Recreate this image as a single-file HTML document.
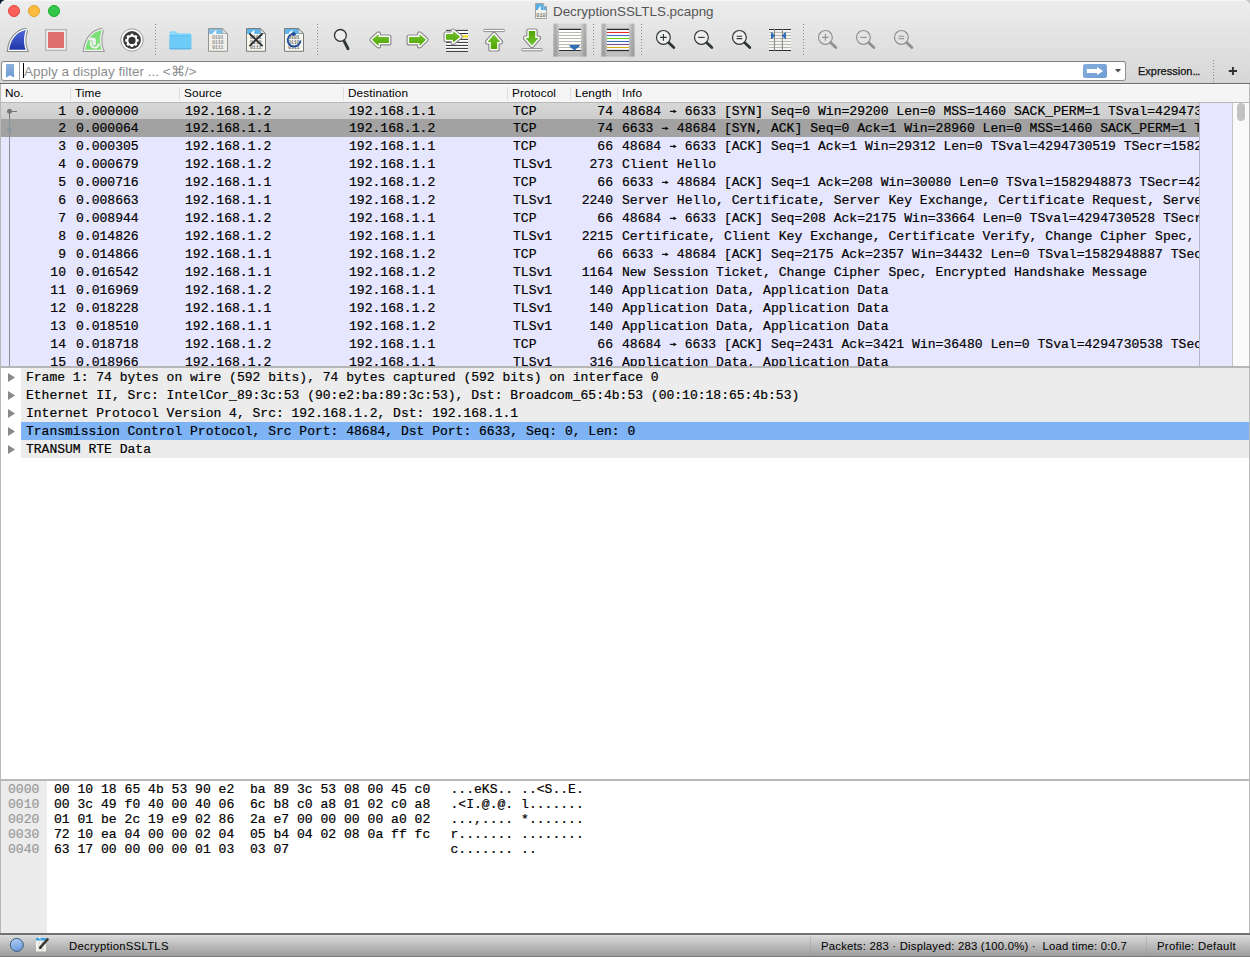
<!DOCTYPE html><html><head><meta charset="utf-8"><style>*{margin:0;padding:0;box-sizing:border-box}
html,body{width:1250px;height:957px;overflow:hidden}
body{position:relative;background:#fff;font-family:"Liberation Sans",sans-serif;color:#000}
#chrome{position:absolute;left:0;top:0;width:1250px;height:84px;background:linear-gradient(#ededed,#d6d6d6);box-shadow:inset 0 1px 0 #f6f6f6}
.tl{position:absolute;top:5px;width:12px;height:12px;border-radius:50%}
#title{position:absolute;left:553px;top:4px;font-size:13.4px;color:#555;white-space:nowrap;line-height:16px}
.ico{position:absolute}
.sep{position:absolute;top:24px;width:1px;height:32px;background:repeating-linear-gradient(#8a8a8a 0 1px,transparent 1px 3px)}
#fbox{position:absolute;left:1px;top:61px;width:1125px;height:20px;background:#fff;border:1px solid #8e8e8e;border-top-color:#808080;border-bottom-color:#8a8a8a;border-radius:3px}
#plist{position:absolute;left:0;top:84px;width:1250px;height:282px;background:#e7e6ff;border-left:1px solid #b8b8b8;border-right:1px solid #b8b8b8;overflow:hidden}
#phead{position:absolute;left:0;top:0;width:1248px;height:19px;background:#f5f5f5;border-top:1px solid #fbfbfb;border-bottom:1px solid #b9b9b9;z-index:2}
.h{position:absolute;top:1px;font-size:11.8px;letter-spacing:0.1px;line-height:14px;color:#000;white-space:nowrap}
.hsep{position:absolute;top:2px;width:1px;height:13px;background:#dedede}
.r{position:absolute;left:0;width:1231px;height:18px;font-family:"Liberation Mono",monospace;font-size:13.07px;line-height:18px;white-space:pre}
.r .c{position:absolute;top:1px}
.r .no{right:1166px;text-align:right}
.r .len{right:619px;text-align:right}
.r .info{left:621px;width:578px;overflow:hidden}
.sel1 .bg,.sel1::before{content:"";position:absolute;left:0;top:0;width:1199px;height:18px;background:linear-gradient(#d9d9d9,#cdcdcd)}
.sel2::before{content:"";position:absolute;left:0;top:0;width:1199px;height:18px;background:#a2a2a2}
#details{position:absolute;left:0;top:366px;width:1250px;height:413px;border-left:1px solid #b8b8b8;border-right:1px solid #b8b8b8;border-top:2px solid #b6b6b6}
#dbg{position:absolute;left:20px;top:0;width:1228px;height:90px;background:#ececec}
.d{position:absolute;left:0;width:1248px;height:18px;font-family:"Liberation Mono",monospace;font-size:13.02px;line-height:18px;white-space:pre}
.d span{position:absolute;left:25px;top:1px}
.d.sel::before{content:"";position:absolute;left:20px;top:0;width:1228px;height:18px;background:#7eb4f6}
.tri{position:absolute;left:7px;top:5px;width:7px;height:9px;background:#888;clip-path:polygon(0 0,100% 50%,0 100%)}
#hex{position:absolute;left:0;top:779px;width:1250px;height:155px;border-left:1px solid #b8b8b8;border-right:1px solid #b8b8b8;border-top:2px solid #b9b9b9}
#hoff{position:absolute;left:0;top:0;width:46px;height:153px;background:#ececec}
.hx{position:absolute;left:0;width:1249px;height:15px;font-family:"Liberation Mono",monospace;font-size:13.07px;line-height:15px;white-space:pre}
.hx span{position:absolute;top:0}
.off{left:7px;color:#999}
.hb{left:53px}
.asc{left:449.5px}
#status{position:absolute;left:0;top:933px;width:1250px;height:24px;background:linear-gradient(#777 0,#6e6e6e 1.5px,#e2e2e2 2px,#d8d8d8 3px,#9c9c9c 23px,#7a7a7a 23px,#7a7a7a 24px);font-size:11.5px;color:#000}
#fdiv{position:absolute;left:17px;top:0;width:1px;height:18px;background:#a4a4a4}
#caret{position:absolute;left:21px;top:1px;width:1px;height:15px;background:#000}
#fph{position:absolute;left:22px;top:1.5px;font-size:13.5px;line-height:16px;color:#8e8e8e;white-space:nowrap}
#expr{position:absolute;left:1138px;top:64px;font-size:11px;line-height:14px;color:#111;white-space:nowrap;-webkit-text-stroke:0.25px #111}
#darkline{position:absolute;left:0;top:83px;width:1250px;height:2px;background:linear-gradient(#6c6c6c 0,#6c6c6c 1.2px,#9a9a9a 1.2px,#d0d0d0 2px)}
#colline{position:absolute;left:1198px;top:19px;width:1px;height:263px;background:#b4b4c8}
#sbar{position:absolute;left:1231px;top:18px;width:17px;height:264px;background:#fafafa;border-left:1px solid #c4c4c4}
#thumb{position:absolute;left:4px;top:1px;width:8px;height:18px;border-radius:4px;background:#c2c2c2}
.st{position:absolute;top:6px;line-height:14px;white-space:pre;font-size:11.3px;letter-spacing:0.28px}
.ssep{position:absolute;top:3px;width:1px;height:20px;background:linear-gradient(#c0c0c0,#9a9a9a)}
.ar{vertical-align:0}
.first .c{top:2px}
.r,.d,.hx{-webkit-text-stroke:0.2px currentColor}
</style></head><body>
<div id="chrome"><svg id="corner" width="1250" height="6" style="position:absolute;left:0;top:0;z-index:5"><path d="M0,0 H4.5 Q1.5,0.8 0,4.5 Z" fill="#0b1836"/><path d="M1250,0 H1245.5 Q1248.5,0.8 1250,4.5 Z" fill="#c9c9c9"/></svg>
<i class="tl" style="left:8px;background:#fc605c;border:1px solid #e0443e"></i>
<i class="tl" style="left:28px;background:#fdbc40;border:1px solid #dea123"></i>
<i class="tl" style="left:48px;background:#34c84a;border:1px solid #1aab29"></i>
<svg width="14" height="18" style="position:absolute;left:534px;top:2px"><path d="M1.5,1.5 H9.5 L12.5,4.5 V16.5 H1.5 Z" fill="#f3f3ec" stroke="#9a9a96" stroke-width="0.9"/><rect x="2" y="2" width="7.5" height="6" fill="#58aee6"/><path d="M9.5,2 L12,4.5 V8 H9.5 Z" fill="#58aee6"/><path d="M9.5,1.5 V4.5 H12.5" fill="#fff" stroke="#9a9a96" stroke-width="0.7"/><path d="M4,8 C4.5,6 5.5,4.5 7,4 C6.5,5.5 6.5,7 7,8 Z" fill="#fff"/><text x="2.3" y="14.6" font-family="Liberation Mono" font-size="5.2" fill="#444">010</text></svg>
<div id="title">DecryptionSSLTLS.pcapng</div>
<svg id="tb" width="1250" height="84" style="position:absolute;left:0;top:0">
<defs>
<linearGradient id="gblue" x1="0" y1="0" x2="0" y2="1"><stop offset="0" stop-color="#5068d8"/><stop offset="1" stop-color="#1f34a8"/></linearGradient>
<linearGradient id="ggreen" x1="0" y1="0" x2="0" y2="1"><stop offset="0" stop-color="#74c334"/><stop offset="1" stop-color="#4ea600"/></linearGradient>
<linearGradient id="gfold" x1="0" y1="0" x2="0" y2="1"><stop offset="0" stop-color="#8fdafc"/><stop offset="1" stop-color="#68c6f3"/></linearGradient>
<linearGradient id="gbtn" x1="0" y1="0" x2="1" y2="0"><stop offset="0" stop-color="#000" stop-opacity="0.02"/><stop offset="0.06" stop-color="#000" stop-opacity="0.2"/><stop offset="0.2" stop-color="#000" stop-opacity="0"/><stop offset="0.8" stop-color="#000" stop-opacity="0"/><stop offset="0.94" stop-color="#000" stop-opacity="0.2"/><stop offset="1" stop-color="#000" stop-opacity="0.02"/></linearGradient><linearGradient id="gbtnv" x1="0" y1="0" x2="0" y2="1"><stop offset="0" stop-color="#d9d9d9"/><stop offset="0.5" stop-color="#cacaca"/><stop offset="1" stop-color="#bdbdbd"/></linearGradient>
</defs>
<!-- blue fin -->
<path d="M9.2,49.8 C10.5,40 16.5,31.5 26.1,30 C23.5,35 23.5,44 25.7,49.8 Z" fill="none" stroke="#8a8a8a" stroke-width="4.6" stroke-linejoin="miter" stroke-miterlimit="1.8"/>
<path d="M9.2,49.8 C10.5,40 16.5,31.5 26.1,30 C23.5,35 23.5,44 25.7,49.8 Z" fill="url(#gblue)" stroke="#fff" stroke-width="2.4" stroke-linejoin="miter" stroke-miterlimit="1.8"/>
<path d="M9.2,49.8 C10.5,40 16.5,31.5 26.1,30 C23.5,35 23.5,44 25.7,49.8 Z" fill="url(#gblue)"/>
<!-- stop -->
<rect x="45.6" y="29.6" width="20.8" height="20.8" fill="#ebebeb" stroke="#b3b3b3" stroke-width="1.2"/>
<rect x="48" y="32" width="16" height="16" fill="#e07070"/>
<!-- green fin -->
<g transform="translate(76,0)">
<path d="M9.2,49.8 C10.5,40 16.5,31.5 26.1,30 C23.5,35 23.5,44 25.7,49.8 Z" fill="none" stroke="#9a9a9a" stroke-width="4.6" stroke-miterlimit="1.8"/>
<path d="M9.2,49.8 C10.5,40 16.5,31.5 26.1,30 C23.5,35 23.5,44 25.7,49.8 Z" fill="#7ddf78" stroke="#f4f0f4" stroke-width="2.4" stroke-miterlimit="1.8"/>
<path d="M9.2,49.8 C10.5,40 16.5,31.5 26.1,30 C23.5,35 23.5,44 25.7,49.8 Z" fill="#7ddf78"/>
<circle cx="19.3" cy="43.8" r="0" fill="none"/><path d="M15.3,41.2 A4.1,4.1 0 1 0 22.8,43.2" fill="none" stroke="#f4eef4" stroke-width="1.9"/><path d="M12,37.8 L18.3,37.8 L19.8,39.2 L19.8,45 L16.6,45 L16.6,40.6 L13.3,40.6 Z" fill="#f4eef4"/></g>
<!-- gear -->
<circle cx="132" cy="40" r="11.2" fill="#fff" stroke="#9a9a9a" stroke-width="1"/>
<circle cx="132" cy="40" r="8.9" fill="#3a3a3a"/>
<g transform="translate(132,40)">
<path id="gearp" d="M-1.1,-6.3 L1.1,-6.3 L1.5,-4.9 L2.7,-4.4 L4,-5.1 L5.5,-3.6 L4.8,-2.3 L5.2,-1.1 L6.6,-0.7 L6.6,1.5 L5.2,1.9 L4.7,3.1 L5.4,4.4 L3.9,5.9 L2.6,5.2 L1.4,5.7 L1,7.1 L-1.2,7.1 L-1.6,5.7 L-2.8,5.2 L-4.1,5.9 L-5.6,4.4 L-4.9,3.1 L-5.4,1.9 L-6.8,1.5 L-6.8,-0.7 L-5.4,-1.1 L-4.9,-2.3 L-5.6,-3.6 L-4.1,-5.1 L-2.8,-4.4 L-1.5,-4.9 Z" fill="#fff"/>
<circle cx="0" cy="0.4" r="3.6" fill="#333"/>
</g>
<!-- folder -->
<path d="M169.5,49 V32.5 Q169.5,31.2 170.8,31.2 H175.6 L177.4,33.3 H190 Q191.3,33.3 191.3,34.6 V48 Q191.3,49.2 190,49.2 H170.8 Q169.5,49.2 169.5,48 Z" fill="url(#gfold)"/>
<rect x="169.5" y="35" width="21.8" height="14.2" rx="1" fill="#6ecaf6"/>
<rect x="169.5" y="35" width="21.8" height="1" fill="#5fc0f0"/>
<rect x="169.5" y="48.2" width="21.8" height="1" fill="#5aaee0"/>
<!-- docs -->
<g transform="translate(202,24)" opacity="0.75"><g>
<path d="M6.5,4.5 H20.6 L25.5,9.4 V27.3 H6.5 Z" fill="#f6f6ee" stroke="#7a7a76" stroke-width="1"/>
<rect x="7" y="5" width="13.6" height="5" fill="#5fb4ea"/>
<path d="M20.6,5 L25,9.4 V10 H7 V10 H20.6 Z" fill="#5fb4ea"/>
<path d="M20.6,5 V9.4 H25 Z" fill="#f2f2f2" stroke="#7a7a76" stroke-width="0.6"/>
<path d="M10.5,10 C11.5,8 13,6.5 15,6 C14,7.5 14,9 14.5,10 Z" fill="#fff"/>
<g font-family="Liberation Mono" font-size="5.2" fill="#7c7c7c" font-weight="bold"><text x="10" y="15.2" textLength="11.7">0101</text><text x="10" y="20.2" textLength="11.7">0110</text><text x="10" y="25" textLength="11.7">0111</text></g>
</g></g>
<g transform="translate(240,24)"><g>
<path d="M6.5,4.5 H20.6 L25.5,9.4 V27.3 H6.5 Z" fill="#f6f6ee" stroke="#7a7a76" stroke-width="1"/>
<rect x="7" y="5" width="13.6" height="5" fill="#5fb4ea"/>
<path d="M20.6,5 L25,9.4 V10 H7 V10 H20.6 Z" fill="#5fb4ea"/>
<path d="M20.6,5 V9.4 H25 Z" fill="#f2f2f2" stroke="#7a7a76" stroke-width="0.6"/>
<path d="M10.5,10 C11.5,8 13,6.5 15,6 C14,7.5 14,9 14.5,10 Z" fill="#fff"/>
<g font-family="Liberation Mono" font-size="5.2" fill="#7c7c7c" font-weight="bold"><text x="10" y="15.2" textLength="11.7">0101</text><text x="10" y="20.2" textLength="11.7">0110</text><text x="10" y="25" textLength="11.7">0111</text></g>
</g><path d="M10,10 L22,21.6 M22,10 L10,21.6" stroke="#2b2f30" stroke-width="1.9" stroke-linecap="round"/></g>
<g transform="translate(278,24)"><g>
<path d="M6.5,4.5 H20.6 L25.5,9.4 V27.3 H6.5 Z" fill="#f6f6ee" stroke="#7a7a76" stroke-width="1"/>
<rect x="7" y="5" width="13.6" height="5" fill="#5fb4ea"/>
<path d="M20.6,5 L25,9.4 V10 H7 V10 H20.6 Z" fill="#5fb4ea"/>
<path d="M20.6,5 V9.4 H25 Z" fill="#f2f2f2" stroke="#7a7a76" stroke-width="0.6"/>
<path d="M10.5,10 C11.5,8 13,6.5 15,6 C14,7.5 14,9 14.5,10 Z" fill="#fff"/>
<g font-family="Liberation Mono" font-size="5.2" fill="#7c7c7c" font-weight="bold"><text x="10" y="15.2" textLength="11.7">0101</text><text x="10" y="20.2" textLength="11.7">0110</text><text x="10" y="25" textLength="11.7">0111</text></g>
</g><path d="M17.2,9.8 A6.4,6.4 0 1 0 22.5,16.5" fill="none" stroke="#1f4f9c" stroke-width="1.9"/><path d="M14.5,7.5 L18.5,10 L15,12.5 Z" fill="#1f4f9c"/></g>
<!-- find -->
<circle cx="340.4" cy="35.4" r="5.9" fill="#ececec" stroke="#2f3435" stroke-width="1.3"/><path d="M336.8,33.2 Q337.8,31.6 339.8,31.3" stroke="#fff" stroke-width="1" fill="none"/><path d="M344.4,41.6 L348,48.6" stroke="#2f3435" stroke-width="3" stroke-linecap="round"/>
<!-- back / forward -->
<g transform="translate(364,24)"><path d="M7.9,15.7 L14.5,9.9 V13 H24.9 V18.9 H14.5 V21.9 Z" fill="none" stroke="#8a8a8a" stroke-width="5.2" stroke-linejoin="round"/><path d="M7.9,15.7 L14.5,9.9 V13 H24.9 V18.9 H14.5 V21.9 Z" fill="#fff" stroke="#fff" stroke-width="2.8" stroke-linejoin="round"/><path d="M7.9,15.7 L14.5,9.9 V13 H24.9 V18.9 H14.5 V21.9 Z" fill="url(#ggreen)"/></g>
<g transform="translate(434,24) scale(-1,1)"><path d="M7.9,15.7 L14.5,9.9 V13 H24.9 V18.9 H14.5 V21.9 Z" fill="none" stroke="#8a8a8a" stroke-width="5.2" stroke-linejoin="round"/><path d="M7.9,15.7 L14.5,9.9 V13 H24.9 V18.9 H14.5 V21.9 Z" fill="#fff" stroke="#fff" stroke-width="2.8" stroke-linejoin="round"/><path d="M7.9,15.7 L14.5,9.9 V13 H24.9 V18.9 H14.5 V21.9 Z" fill="url(#ggreen)"/></g>
<!-- goto -->
<g transform="translate(440,24)">
<rect x="6" y="6" width="22" height="22" fill="#fff"/>
<g stroke="#2a2e2f" stroke-width="1"><path d="M6,6.4H28M6,9.5H28M6,15.4H28M6,18.4H28M6,21.4H28M6,24.4H28M6,27.4H28"/></g>
<rect x="21" y="11.2" width="7" height="2.6" fill="#f2dc34"/>
<path id="garrow" d="M6,10 H13 V6.9 L20.2,12.7 L13,18.6 V15.7 H6 Z" fill="none" stroke="#8a8a8a" stroke-width="5" stroke-linejoin="round"/>
<path d="M6,10 H13 V6.9 L20.2,12.7 L13,18.6 V15.7 H6 Z" fill="#fff" stroke="#fff" stroke-width="2.8" stroke-linejoin="round"/>
<path d="M6,10 H13 V6.9 L20.2,12.7 L13,18.6 V15.7 H6 Z" fill="url(#ggreen)"/>
</g>
<!-- first -->
<g transform="translate(478,24)">
<rect x="5.5" y="5.4" width="21" height="2.2" rx="1.1" fill="#fff" stroke="#808080" stroke-width="0.9"/>
<path d="M16,10.5 L22.5,18 H19.2 V25 H12.8 V18 H9.5 Z" fill="none" stroke="#8a8a8a" stroke-width="5.2" stroke-linejoin="round"/><path d="M16,10.5 L22.5,18 H19.2 V25 H12.8 V18 H9.5 Z" fill="#fff" stroke="#fff" stroke-width="2.8" stroke-linejoin="round"/><path d="M16,10.5 L22.5,18 H19.2 V25 H12.8 V18 H9.5 Z" fill="url(#ggreen)"/>
</g>
<!-- last -->
<g transform="translate(516,24)">
<rect x="5.5" y="24.6" width="21" height="2.2" rx="1.1" fill="#fff" stroke="#808080" stroke-width="0.9"/>
<g transform="translate(0,32) scale(1,-1)"><path d="M16,10.5 L22.5,18 H19.2 V25 H12.8 V18 H9.5 Z" fill="none" stroke="#8a8a8a" stroke-width="5.2" stroke-linejoin="round"/><path d="M16,10.5 L22.5,18 H19.2 V25 H12.8 V18 H9.5 Z" fill="#fff" stroke="#fff" stroke-width="2.8" stroke-linejoin="round"/><path d="M16,10.5 L22.5,18 H19.2 V25 H12.8 V18 H9.5 Z" fill="url(#ggreen)"/></g>
</g>
<!-- autoscroll pressed -->
<rect x="553" y="23.6" width="34" height="33" fill="url(#gbtnv)"/><rect x="553" y="23.6" width="34" height="33" fill="url(#gbtn)"/>
<rect x="559" y="29" width="22" height="22" fill="#fff"/>
<g stroke="#b9b9b0" stroke-width="1"><path d="M559,32.5H581M559,35.5H581M559,38.5H581M559,41.5H581M559,44.5H581M559,47.5H581"/></g>
<g stroke="#2a2e2f" stroke-width="1.2"><path d="M559,29.4H581M559,50.5H581"/></g>
<path d="M569.5,45 H580 Q579.5,47.5 576,49 L574.8,51 L573,49 Q569.5,47.5 569.5,45 Z" fill="#2f6db5"/>
<!-- colorize pressed -->
<rect x="601" y="23.6" width="34" height="33" fill="url(#gbtnv)"/><rect x="601" y="23.6" width="34" height="33" fill="url(#gbtn)"/>
<rect x="607" y="29" width="22" height="22" fill="#fff"/>
<g stroke-width="1.1">
<path d="M607,29.4H629" stroke="#2a2e2f" stroke-width="1.3"/>
<path d="M607,32.5H629" stroke="#ee2b2b"/>
<path d="M607,35.5H629" stroke="#3b6fc0"/>
<path d="M607,38.5H629" stroke="#63d117"/>
<path d="M607,41.5H629" stroke="#3b6fc0"/>
<path d="M607,44.5H629" stroke="#7a4e8c"/>
<path d="M607,47.5H629" stroke="#d7a91a"/>
<path d="M607,50.5H629" stroke="#2a2e2f" stroke-width="1.3"/>
</g>
<!-- zoom in/out/normal -->
<g transform="translate(650,24)"><g><circle cx="13.4" cy="13.4" r="6.9" fill="#efefef" stroke="#2f3435" stroke-width="1.2"/><path d="M18.8,18.8 L23.8,23.6" stroke="#2f3435" stroke-width="2.8" stroke-linecap="round"/></g><path d="M10.1,13.4H16.7M13.4,10.1V16.7" stroke="#2f3435" stroke-width="1.1"/></g>
<g transform="translate(688,24)"><g><circle cx="13.4" cy="13.4" r="6.9" fill="#efefef" stroke="#2f3435" stroke-width="1.2"/><path d="M18.8,18.8 L23.8,23.6" stroke="#2f3435" stroke-width="2.8" stroke-linecap="round"/></g><path d="M10.1,13.4H16.7" stroke="#2f3435" stroke-width="1.1"/></g>
<g transform="translate(726,24)"><g><circle cx="13.4" cy="13.4" r="6.9" fill="#efefef" stroke="#2f3435" stroke-width="1.2"/><path d="M18.8,18.8 L23.8,23.6" stroke="#2f3435" stroke-width="2.8" stroke-linecap="round"/></g><path d="M10.6,12.2H16.2M10.6,14.6H16.2" stroke="#2f3435" stroke-width="1.1"/></g>
<!-- resize columns -->
<g transform="translate(764,24)">
<rect x="5" y="5.3" width="22" height="21.2" fill="#f4f4f4"/>
<g stroke="#b9b9b0" stroke-width="1"><path d="M5,8.4H27M5,11.5H27M5,14.5H27M5,17.5H27M5,20.5H27M5,23.5H27"/></g>
<g stroke="#2a2e2f" stroke-width="1.2"><path d="M5,5.5H27M5,26.5H27"/></g>
<g stroke="#8c8e8a" stroke-width="1.1"><path d="M10.5,5.3V26.5M18.4,5.3V26.5"/></g>
<path d="M7,8.5 Q7.5,8.2 8.2,8.5 L11,11.7 L8.2,14.8 Q7.5,15.1 7,14.8 Z" fill="#2f6db5"/>
<path d="M22,8.5 Q21.5,8.2 20.8,8.5 L18,11.7 L20.8,14.8 Q21.5,15.1 22,14.8 Z" fill="#2f6db5"/>
</g>
<!-- disabled zoom -->
<g transform="translate(812,24)"><g><circle cx="13.4" cy="13.4" r="6.9" fill="#e4e4e4" stroke="#8f9090" stroke-width="1.2"/><path d="M18.8,18.8 L23.8,23.6" stroke="#8f9090" stroke-width="2.8" stroke-linecap="round"/></g><path d="M10.1,13.4H16.7M13.4,10.1V16.7" stroke="#8f9090" stroke-width="1.1"/></g>
<g transform="translate(850,24)"><g><circle cx="13.4" cy="13.4" r="6.9" fill="#e4e4e4" stroke="#8f9090" stroke-width="1.2"/><path d="M18.8,18.8 L23.8,23.6" stroke="#8f9090" stroke-width="2.8" stroke-linecap="round"/></g><path d="M10.1,13.4H16.7" stroke="#8f9090" stroke-width="1.1"/></g>
<g transform="translate(888,24)"><g><circle cx="13.4" cy="13.4" r="6.9" fill="#e4e4e4" stroke="#8f9090" stroke-width="1.2"/><path d="M18.8,18.8 L23.8,23.6" stroke="#8f9090" stroke-width="2.8" stroke-linecap="round"/></g><path d="M10.6,12.2H16.2M10.6,14.6H16.2" stroke="#8f9090" stroke-width="1.1"/></g>
<!-- separators -->
<g fill="#7c7c7c"><rect x="155" y="24" width="1" height="1"/></g>
</svg>
<i class="sep" style="left:155px"></i>
<i class="sep" style="left:317px"></i>
<i class="sep" style="left:593px"></i>
<i class="sep" style="left:641px"></i>
<i class="sep" style="left:803px"></i>
<div id="fbox"><i id="fdiv"></i>
<svg width="10" height="16" style="position:absolute;left:4px;top:2px"><defs><linearGradient id="gbm" x1="0" y1="0" x2="0" y2="1"><stop offset="0" stop-color="#8cb2de"/><stop offset="1" stop-color="#6b9bd6"/></linearGradient></defs><path d="M0,0 H8 V13.7 L4,11.2 L0,13.7 Z" fill="url(#gbm)"/></svg>
<i id="caret"></i><span id="fph">Apply a display filter ... &lt;⌘/&gt;</span>
<svg width="25" height="15" style="position:absolute;left:1081px;top:2px"><defs><linearGradient id="gab" x1="0" y1="0" x2="1" y2="1"><stop offset="0" stop-color="#86aedd"/><stop offset="1" stop-color="#6e9dd5"/></linearGradient></defs><rect x="0" y="0" width="24" height="14" rx="2.2" fill="url(#gab)"/><path d="M3.8,5 H14 V3 L20.2,7 L14,11 V9 H3.8 Z" fill="#fff"/></svg>
<svg width="10" height="8" style="position:absolute;left:1112px;top:6px"><path d="M0.9,1 H7.1 L4,4.4 Z" fill="#4a4a4a"/></svg>
</div>
<span id="expr">Expression<span style="letter-spacing:-0.6px">...</span></span>
<i class="sep" style="left:1213px;top:60px;height:23px"></i>
<svg width="12" height="12" style="position:absolute;left:1227px;top:65px"><path d="M1.8,6 H10 M5.9,2 V10.1" stroke="#303030" stroke-width="1.9"/></svg>
<i id="darkline"></i>
</div>

<div id="plist">
<div id="phead"><span class="h" style="left:4px">No.</span><span class="h" style="left:74px">Time</span><span class="h" style="left:183px">Source</span><span class="h" style="left:347px">Destination</span><span class="h" style="left:511px">Protocol</span><span class="h" style="left:574px">Length</span><span class="h" style="left:621px">Info</span>
<i class="hsep" style="left:69px"></i>
<i class="hsep" style="left:178px"></i>
<i class="hsep" style="left:342px"></i>
<i class="hsep" style="left:506px"></i>
<i class="hsep" style="left:569px"></i>
<i class="hsep" style="left:616px"></i>
</div>
<div class="r sel1 first" style="top:17px">
<span class="c no">1</span><span class="c" style="left:75px">0.000000</span><span class="c" style="left:184px">192.168.1.2</span><span class="c" style="left:348px">192.168.1.1</span><span class="c" style="left:512px">TCP</span><span class="c len">74</span><span class="c info">48684 <svg class="ar" width="7.839" height="8"><path d="M0.9,4.4 H5.2" stroke="#111" stroke-width="1.2"/><path d="M4.5,2.6 L7.8,4.4 L4.5,6.2 Z" fill="#111"/></svg> 6633 [SYN] Seq=0 Win=29200 Len=0 MSS=1460 SACK_PERM=1 TSval=4294730519 TSecr=0 WS=128</span>
</div>
<div class="r sel2" style="top:35px">
<span class="c no">2</span><span class="c" style="left:75px">0.000064</span><span class="c" style="left:184px">192.168.1.1</span><span class="c" style="left:348px">192.168.1.2</span><span class="c" style="left:512px">TCP</span><span class="c len">74</span><span class="c info">6633 <svg class="ar" width="7.839" height="8"><path d="M0.9,4.4 H5.2" stroke="#111" stroke-width="1.2"/><path d="M4.5,2.6 L7.8,4.4 L4.5,6.2 Z" fill="#111"/></svg> 48684 [SYN, ACK] Seq=0 Ack=1 Win=28960 Len=0 MSS=1460 SACK_PERM=1 TSval=1582948873</span>
</div>
<div class="r" style="top:53px">
<span class="c no">3</span><span class="c" style="left:75px">0.000305</span><span class="c" style="left:184px">192.168.1.2</span><span class="c" style="left:348px">192.168.1.1</span><span class="c" style="left:512px">TCP</span><span class="c len">66</span><span class="c info">48684 <svg class="ar" width="7.839" height="8"><path d="M0.9,4.4 H5.2" stroke="#111" stroke-width="1.2"/><path d="M4.5,2.6 L7.8,4.4 L4.5,6.2 Z" fill="#111"/></svg> 6633 [ACK] Seq=1 Ack=1 Win=29312 Len=0 TSval=4294730519 TSecr=1582948873</span>
</div>
<div class="r" style="top:71px">
<span class="c no">4</span><span class="c" style="left:75px">0.000679</span><span class="c" style="left:184px">192.168.1.2</span><span class="c" style="left:348px">192.168.1.1</span><span class="c" style="left:512px">TLSv1</span><span class="c len">273</span><span class="c info">Client Hello</span>
</div>
<div class="r" style="top:89px">
<span class="c no">5</span><span class="c" style="left:75px">0.000716</span><span class="c" style="left:184px">192.168.1.1</span><span class="c" style="left:348px">192.168.1.2</span><span class="c" style="left:512px">TCP</span><span class="c len">66</span><span class="c info">6633 <svg class="ar" width="7.839" height="8"><path d="M0.9,4.4 H5.2" stroke="#111" stroke-width="1.2"/><path d="M4.5,2.6 L7.8,4.4 L4.5,6.2 Z" fill="#111"/></svg> 48684 [ACK] Seq=1 Ack=208 Win=30080 Len=0 TSval=1582948873 TSecr=4294730519</span>
</div>
<div class="r" style="top:107px">
<span class="c no">6</span><span class="c" style="left:75px">0.008663</span><span class="c" style="left:184px">192.168.1.1</span><span class="c" style="left:348px">192.168.1.2</span><span class="c" style="left:512px">TLSv1</span><span class="c len">2240</span><span class="c info">Server Hello, Certificate, Server Key Exchange, Certificate Request, Server Hello Done</span>
</div>
<div class="r" style="top:125px">
<span class="c no">7</span><span class="c" style="left:75px">0.008944</span><span class="c" style="left:184px">192.168.1.2</span><span class="c" style="left:348px">192.168.1.1</span><span class="c" style="left:512px">TCP</span><span class="c len">66</span><span class="c info">48684 <svg class="ar" width="7.839" height="8"><path d="M0.9,4.4 H5.2" stroke="#111" stroke-width="1.2"/><path d="M4.5,2.6 L7.8,4.4 L4.5,6.2 Z" fill="#111"/></svg> 6633 [ACK] Seq=208 Ack=2175 Win=33664 Len=0 TSval=4294730528 TSecr=1582948882</span>
</div>
<div class="r" style="top:143px">
<span class="c no">8</span><span class="c" style="left:75px">0.014826</span><span class="c" style="left:184px">192.168.1.2</span><span class="c" style="left:348px">192.168.1.1</span><span class="c" style="left:512px">TLSv1</span><span class="c len">2215</span><span class="c info">Certificate, Client Key Exchange, Certificate Verify, Change Cipher Spec, Encrypted Handshake</span>
</div>
<div class="r" style="top:161px">
<span class="c no">9</span><span class="c" style="left:75px">0.014866</span><span class="c" style="left:184px">192.168.1.1</span><span class="c" style="left:348px">192.168.1.2</span><span class="c" style="left:512px">TCP</span><span class="c len">66</span><span class="c info">6633 <svg class="ar" width="7.839" height="8"><path d="M0.9,4.4 H5.2" stroke="#111" stroke-width="1.2"/><path d="M4.5,2.6 L7.8,4.4 L4.5,6.2 Z" fill="#111"/></svg> 48684 [ACK] Seq=2175 Ack=2357 Win=34432 Len=0 TSval=1582948887 TSecr=4294730533</span>
</div>
<div class="r" style="top:179px">
<span class="c no">10</span><span class="c" style="left:75px">0.016542</span><span class="c" style="left:184px">192.168.1.1</span><span class="c" style="left:348px">192.168.1.2</span><span class="c" style="left:512px">TLSv1</span><span class="c len">1164</span><span class="c info">New Session Ticket, Change Cipher Spec, Encrypted Handshake Message</span>
</div>
<div class="r" style="top:197px">
<span class="c no">11</span><span class="c" style="left:75px">0.016969</span><span class="c" style="left:184px">192.168.1.2</span><span class="c" style="left:348px">192.168.1.1</span><span class="c" style="left:512px">TLSv1</span><span class="c len">140</span><span class="c info">Application Data, Application Data</span>
</div>
<div class="r" style="top:215px">
<span class="c no">12</span><span class="c" style="left:75px">0.018228</span><span class="c" style="left:184px">192.168.1.1</span><span class="c" style="left:348px">192.168.1.2</span><span class="c" style="left:512px">TLSv1</span><span class="c len">140</span><span class="c info">Application Data, Application Data</span>
</div>
<div class="r" style="top:233px">
<span class="c no">13</span><span class="c" style="left:75px">0.018510</span><span class="c" style="left:184px">192.168.1.1</span><span class="c" style="left:348px">192.168.1.2</span><span class="c" style="left:512px">TLSv1</span><span class="c len">140</span><span class="c info">Application Data, Application Data</span>
</div>
<div class="r" style="top:251px">
<span class="c no">14</span><span class="c" style="left:75px">0.018718</span><span class="c" style="left:184px">192.168.1.2</span><span class="c" style="left:348px">192.168.1.1</span><span class="c" style="left:512px">TCP</span><span class="c len">66</span><span class="c info">48684 <svg class="ar" width="7.839" height="8"><path d="M0.9,4.4 H5.2" stroke="#111" stroke-width="1.2"/><path d="M4.5,2.6 L7.8,4.4 L4.5,6.2 Z" fill="#111"/></svg> 6633 [ACK] Seq=2431 Ack=3421 Win=36480 Len=0 TSval=4294730538 TSecr=1582948892</span>
</div>
<div class="r" style="top:269px">
<span class="c no">15</span><span class="c" style="left:75px">0.018966</span><span class="c" style="left:184px">192.168.1.2</span><span class="c" style="left:348px">192.168.1.1</span><span class="c" style="left:512px">TLSv1</span><span class="c len">316</span><span class="c info">Application Data, Application Data</span>
</div>
<i id="colline"></i><div id="sbar"><i id="thumb"></i></div>
<svg width="20" height="283" style="position:absolute;left:-1px;top:0;z-index:1"><path d="M9.5,27.3 V283" stroke="#88939a" stroke-width="1"/><path d="M9.5,27.3 V35" stroke="#777" stroke-width="1"/><circle cx="9.5" cy="27.3" r="2.5" fill="#777"/><path d="M9.5,27.5 H17" stroke="#777" stroke-width="1"/><circle cx="9.5" cy="45.6" r="2.5" fill="#8a99a0"/></svg>
</div>
<div id="details"><div id="dbg"></div>
<div class="d" style="top:0px"><i class="tri"></i><span>Frame 1: 74 bytes on wire (592 bits), 74 bytes captured (592 bits) on interface 0</span></div>
<div class="d" style="top:18px"><i class="tri"></i><span>Ethernet II, Src: IntelCor_89:3c:53 (90:e2:ba:89:3c:53), Dst: Broadcom_65:4b:53 (00:10:18:65:4b:53)</span></div>
<div class="d" style="top:36px"><i class="tri"></i><span>Internet Protocol Version 4, Src: 192.168.1.2, Dst: 192.168.1.1</span></div>
<div class="d sel" style="top:54px"><i class="tri"></i><span>Transmission Control Protocol, Src Port: 48684, Dst Port: 6633, Seq: 0, Len: 0</span></div>
<div class="d" style="top:72px"><i class="tri"></i><span>TRANSUM RTE Data</span></div>
</div>
<div id="hex"><div id="hoff"></div>
<div class="hx" style="top:1px"><span class="off">0000</span><span class="hb">00 10 18 65 4b 53 90 e2  ba 89 3c 53 08 00 45 c0</span><span class="asc">...eKS.. ..&lt;S..E.</span></div>
<div class="hx" style="top:16px"><span class="off">0010</span><span class="hb">00 3c 49 f0 40 00 40 06  6c b8 c0 a8 01 02 c0 a8</span><span class="asc">.&lt;I.@.@. l.......</span></div>
<div class="hx" style="top:31px"><span class="off">0020</span><span class="hb">01 01 be 2c 19 e9 02 86  2a e7 00 00 00 00 a0 02</span><span class="asc">...,.... *.......</span></div>
<div class="hx" style="top:46px"><span class="off">0030</span><span class="hb">72 10 ea 04 00 00 02 04  05 b4 04 02 08 0a ff fc</span><span class="asc">r....... ........</span></div>
<div class="hx" style="top:61px"><span class="off">0040</span><span class="hb">63 17 00 00 00 00 01 03  03 07</span><span class="asc">c....... ..</span></div>
</div>
<div id="status">
<svg width="60" height="24" style="position:absolute;left:0;top:0">
<defs><linearGradient id="gcirc" x1="0" y1="0" x2="0.3" y2="1"><stop offset="0" stop-color="#b4d0f3"/><stop offset="1" stop-color="#6f9fe0"/></linearGradient></defs>
<circle cx="16.8" cy="11.9" r="6.5" fill="url(#gcirc)" stroke="#3b5877" stroke-width="1"/>
<rect x="36" y="5" width="10" height="13.4" fill="#f4f4ee"/>
<rect x="36" y="5" width="10" height="2.6" fill="#36a4e0"/>
<path d="M39,5 L40,3.8 L40.6,7.6 Z" fill="#fff"/>
<path d="M38,10h2M41,10h3M38,13h1.5M41,13h2M38,16h2M41,16h3" stroke="#b8b8b8" stroke-width="0.8"/>
<path d="M40.2,14.6 L47.5,6.3" stroke="#3a3a3a" stroke-width="2.6" stroke-linecap="round"/>
<path d="M39.2,15.8 L40.6,13.6 L41.6,14.6 Z" fill="#111"/>
</svg>
<span class="st" style="left:69px">DecryptionSSLTLS</span>
<i class="ssep" style="left:810px"></i>
<span class="st" style="left:821px;letter-spacing:0.22px">Packets: 283 · Displayed: 283 (100.0%) ·  Load time: 0:0.7</span>
<i class="ssep" style="left:1146px"></i>
<span class="st" style="left:1157px;letter-spacing:0.3px">Profile: Default</span>
</div>

</body></html>
